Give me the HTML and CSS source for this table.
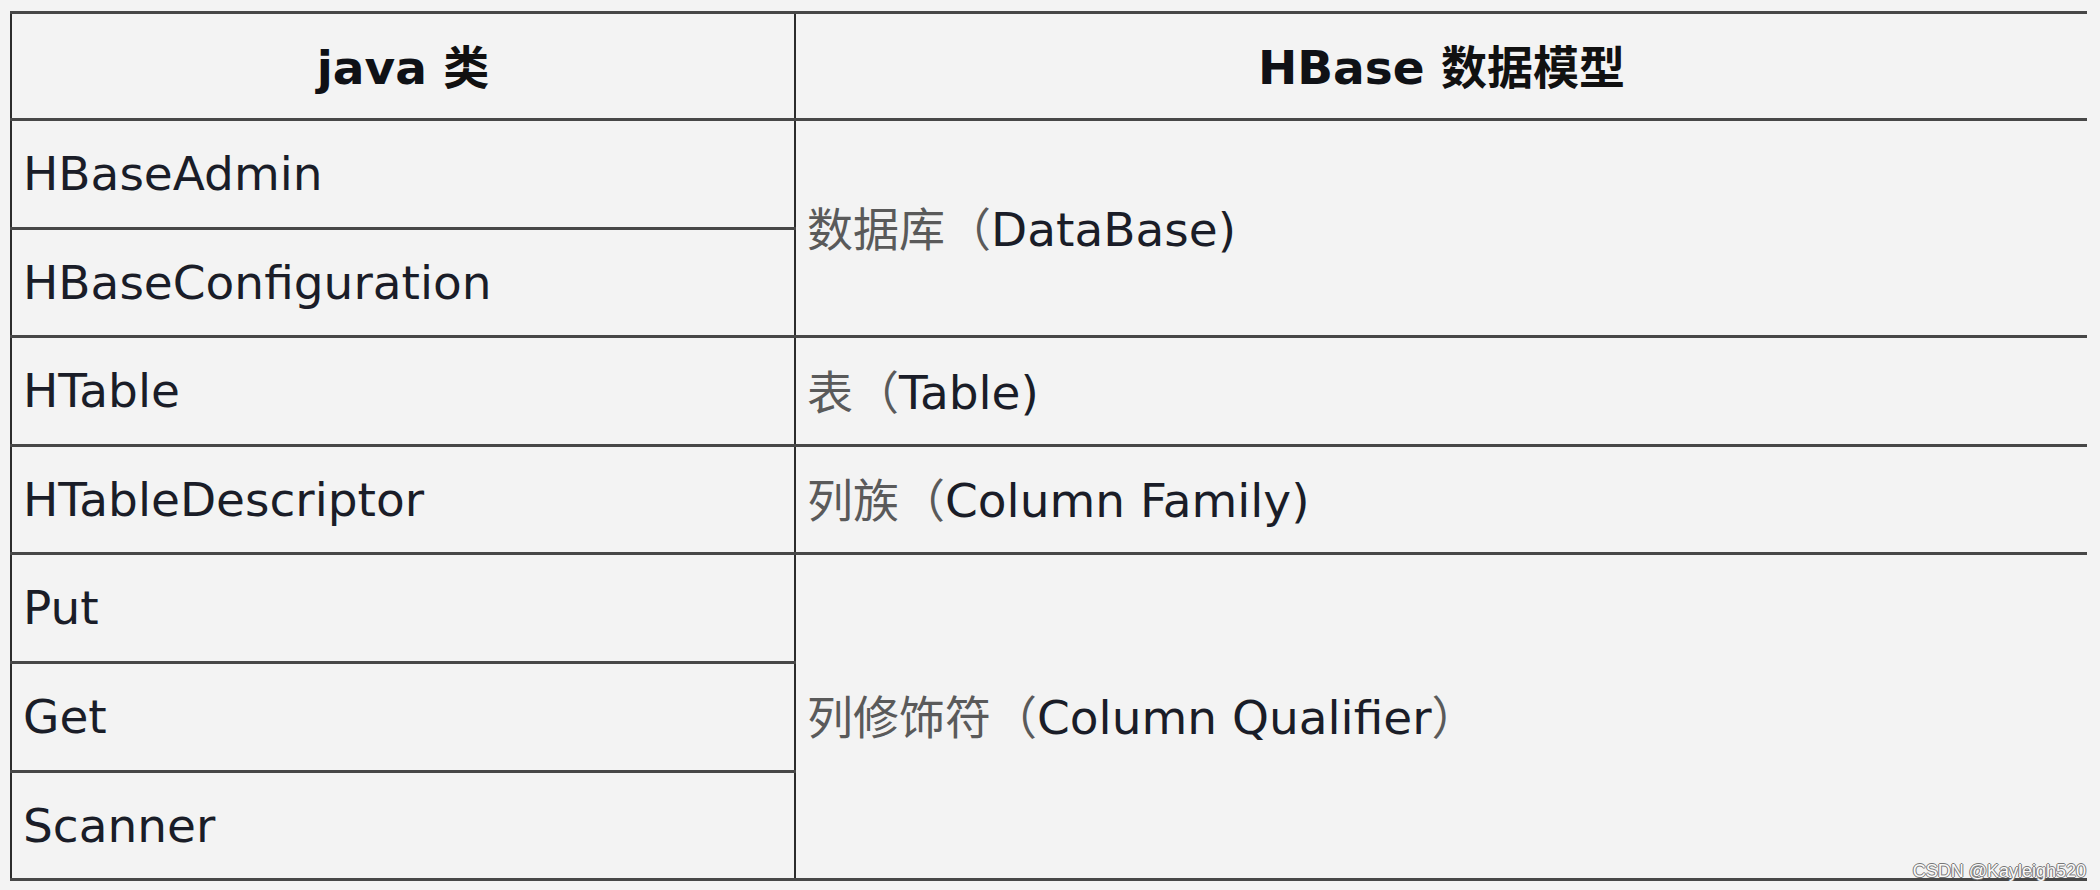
FILE: index.html
```html
<!DOCTYPE html>
<html lang="zh-CN">
<head>
<meta charset="utf-8">
<title>java 类 与 HBase 数据模型</title>
<link rel="stylesheet" href="styles.css">
</head>
<body>
<div class="frame">
  <table class="model">
    <colgroup><col class="c1"><col class="c2"></colgroup>
    <thead>
      <tr class="head">
        <th>java <span class="zh-b">类</span></th>
        <th class="right">HBase <span class="zh-b">数据模型</span></th>
      </tr>
    </thead>
    <tbody>
      <tr><td>HBaseAdmin</td><td class="right" rowspan="2"><span class="zh">数据库（</span>DataBase)</td></tr>
      <tr><td>HBaseConfiguration</td></tr>
      <tr><td>HTable</td><td class="right"><span class="zh">表（</span>Table)</td></tr>
      <tr><td>HTableDescriptor</td><td class="right"><span class="zh">列族（</span>Column Family)</td></tr>
      <tr><td>Put</td><td class="right" rowspan="3"><span class="zh">列修饰符（</span>Column Qualifier<span class="zh">）</span></td></tr>
      <tr><td>Get</td></tr>
      <tr><td>Scanner</td></tr>
    </tbody>
  </table>
  <span class="mark">CSDN @Kayleigh520</span>
</div>
</body>
</html>
```

FILE: styles.css
```css
html, body {
  margin: 0;
  background: #f3f3f3;
}

body {
  padding: 11px 0 0 10px;
}

.frame {
  position: relative;
  width: 2077px;
}

.model {
  width: 100%;
  border-collapse: collapse;
  table-layout: fixed;
  font-family: "DejaVu Sans", "Noto Sans CJK SC", sans-serif;
  font-size: 47px;
  color: #1a1d28;
}

.model col.c1 {
  width: 784px;
}

.model tr {
  height: 108.6px;
}

.model tr.head {
  height: 107px;
}

.model th,
.model td {
  border-top: 3px solid #474747;
  border-bottom: 3px solid #474747;
  border-left: 2px solid #2c2c2c;
  border-right: 2px solid #2c2c2c;
  padding: 0 0 0 11px;
  vertical-align: middle;
  text-align: left;
  font-weight: normal;
  line-height: 1.1;
  white-space: nowrap;
}

.model th {
  text-align: center;
  font-weight: bold;
  color: #0f1116;
  padding: 0;
}

.model .right {
  border-right: none;
}

.zh {
  color: #5a5a5a;
  font-family: "Noto Sans CJK SC", sans-serif;
  font-weight: 400;
  font-size: 46px;
}

.zh-b {
  color: #111;
  font-family: "Noto Sans CJK SC", sans-serif;
  font-weight: 700;
  font-size: 46px;
}

.mark {
  position: absolute;
  right: 1px;
  bottom: 1px;
  font-family: "Liberation Sans", Arial, sans-serif;
  font-size: 18px;
  line-height: 1;
  color: #fafafa;
  text-shadow: -1px 0 #777, 1px 0 #777, 0 -1px #777, 0 1px #777;
}
```
